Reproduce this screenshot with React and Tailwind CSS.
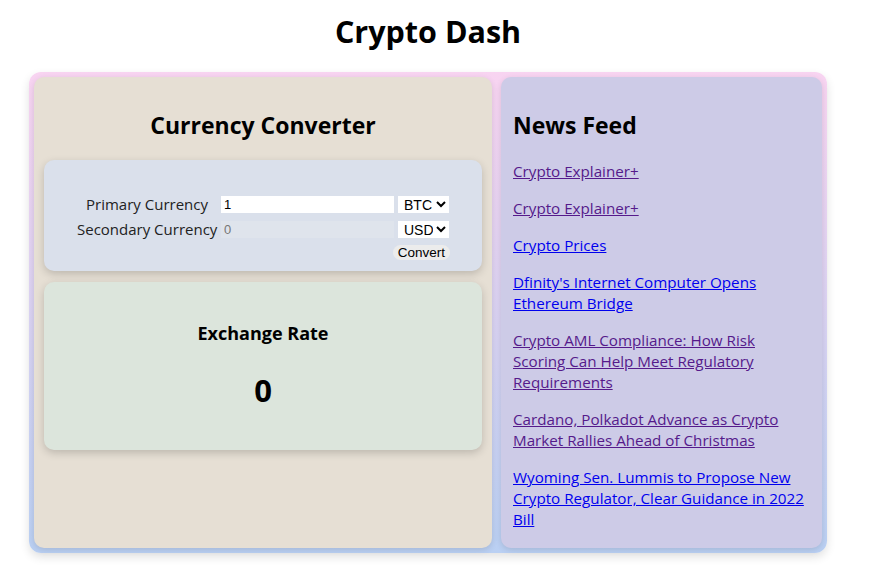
import React from 'react';

const news = [
  { title: 'Crypto Explainer+', visited: true },
  { title: 'Crypto Explainer+', visited: true },
  { title: 'Crypto Prices', visited: false },
  { title: "Dfinity's Internet Computer Opens Ethereum Bridge", visited: false },
  { title: 'Crypto AML Compliance: How Risk Scoring Can Help Meet Regulatory Requirements', visited: true },
  { title: 'Cardano, Polkadot Advance as Crypto Market Rallies Ahead of Christmas', visited: true },
  { title: 'Wyoming Sen. Lummis to Propose New Crypto Regulator, Clear Guidance in 2022 Bill', visited: false },
];

const CurrencyConverter = () => (
  <div className="w-[458px] shrink-0 rounded-[10px] bg-[#e6dfd4] px-[10px] shadow-[0_2px_6px_rgba(0,0,0,0.12)]">
    <h2 className="pt-[32px] text-center text-[23px] font-bold leading-[32px]">Currency Converter</h2>

    {/* form box */}
    <div className="mt-[19px] h-[111px] rounded-[10px] bg-[#dae0eb] pt-[36px] shadow-[0_3px_8px_rgba(0,0,0,0.18)]">
      <div className="mx-auto grid w-[372px] grid-cols-[140px_173px_51px] items-center gap-x-[4px] gap-y-[8px]">
        <div className="text-center text-[15px] leading-[17px] text-[#222]">Primary Currency</div>
        <input
          type="number"
          defaultValue="1"
          className="h-[17px] w-full bg-white px-[3px] font-['Liberation_Sans',sans-serif] text-[13px] outline-none"
        />
        <select className="h-[17px] w-full bg-white pl-[2px] font-['Liberation_Sans',sans-serif] text-[14px] leading-[17px]">
          <option>BTC</option>
        </select>

        <div className="whitespace-nowrap text-center text-[15px] leading-[17px] text-[#222]">Secondary Currency</div>
        <input
          type="number"
          defaultValue="0"
          disabled
          className="h-[17px] w-full bg-[#dfe4ec] px-[3px] font-['Liberation_Sans',sans-serif] text-[13px] text-[#777]"
        />
        <select className="h-[17px] w-full bg-white pl-[2px] font-['Liberation_Sans',sans-serif] text-[14px] leading-[17px]">
          <option>USD</option>
        </select>

        <div className="col-span-3 -mt-[1px] flex justify-end">
          <button className="-mr-[1px] h-[15px] rounded-full bg-[#ececec] px-[5px] font-['Liberation_Sans',sans-serif] text-[13.5px] leading-[15px] text-black">
            Convert
          </button>
        </div>
      </div>
    </div>

    {/* exchange rate box */}
    <div className="mt-[11px] h-[168px] rounded-[10px] bg-[#dce5dc] pt-[39px] text-center shadow-[0_3px_8px_rgba(0,0,0,0.18)]">
      <h3 className="text-[18px] font-bold leading-[25px]">Exchange Rate</h3>
      <h1 className="mt-[23px] text-[31px] font-bold leading-[43px]">0</h1>
    </div>
  </div>
);

const NewsFeed = () => (
  <div className="w-[321px] shrink-0 rounded-[10px] bg-[#cdcbe7] px-[12px] shadow-[0_2px_6px_rgba(0,0,0,0.12)]">
    <h2 className="pt-[32px] text-[23px] font-bold leading-[32px]">News Feed</h2>
    <div className="mt-[20px]">
      {news.map((item, i) => (
        <p key={i} className="mb-[16px] text-[15.2px] leading-[21px]">
          <a href="#" className={`underline ${item.visited ? 'text-[#551a8b]' : 'text-[#0000ee]'}`}>
            {item.title}
          </a>
        </p>
      ))}
    </div>
  </div>
);

export default function App() {
  return (
    <div className="min-h-[587px] bg-white font-['Open_Sans',sans-serif] text-black">
      <div className="w-[856px]">
        <h1 className="pb-[19px] pt-[10px] text-center text-[30.5px] font-bold leading-[43px]">Crypto Dash</h1>
        <div className="mx-auto flex h-[481px] w-[798px] gap-[9px] rounded-[12px] bg-gradient-to-b from-[#f8d4f1] to-[#bad0f3] p-[5px] shadow-[0_4px_10px_rgba(0,0,0,0.12)]">
          <CurrencyConverter />
          <NewsFeed />
        </div>
      </div>
    </div>
  );
}
